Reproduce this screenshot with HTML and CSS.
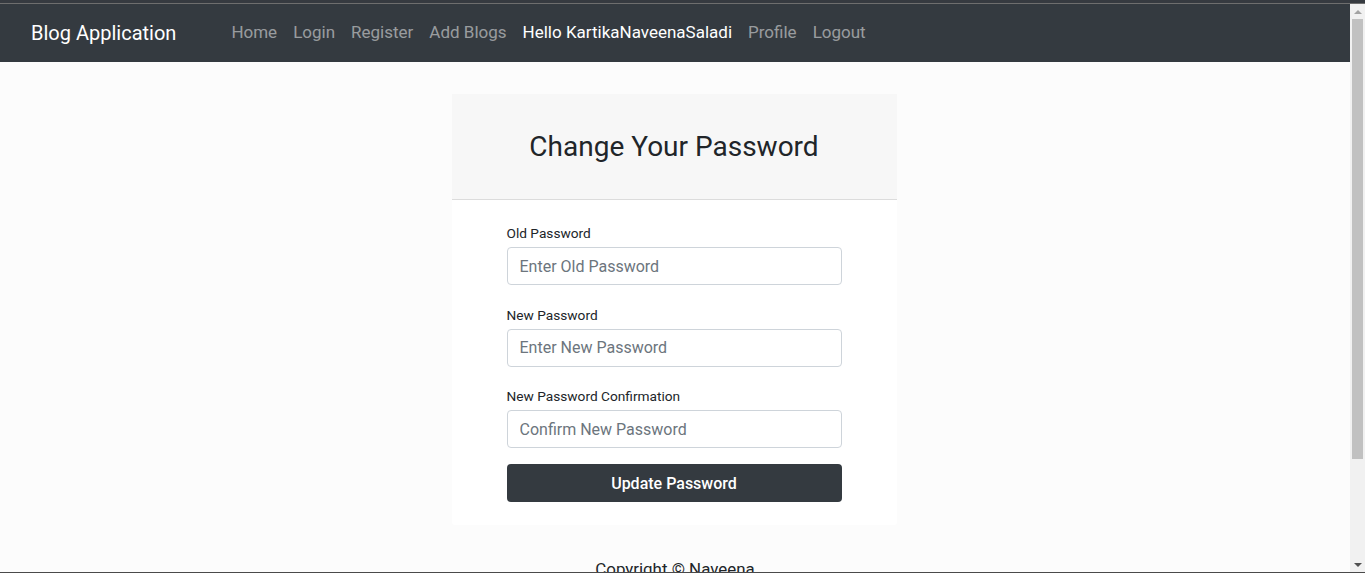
FILE: index.html
```html
<!DOCTYPE html>
<html lang="en">
<head>
<meta charset="utf-8">
<title>Change Your Password</title>
<link rel="stylesheet" href="styles.css">
</head>
<body>
<div class="topstrip"></div>
<div class="frame">
  <div class="viewport">
    <nav class="navbar">
      <a class="brand" href="#">Blog Application</a>
      <ul class="nav">
        <li><a class="nav-link" href="#">Home</a></li>
        <li><a class="nav-link" href="#">Login</a></li>
        <li><a class="nav-link" href="#">Register</a></li>
        <li><a class="nav-link" href="#">Add Blogs</a></li>
        <li><span class="nav-link active">Hello KartikaNaveenaSaladi</span></li>
        <li><a class="nav-link" href="#">Profile</a></li>
        <li><a class="nav-link" href="#">Logout</a></li>
      </ul>
    </nav>
    <main class="main">
      <section class="card">
        <header class="card-header">
          <h2 class="card-title">Change Your Password</h2>
        </header>
        <form class="card-body">
          <div class="form-group">
            <label class="label" for="old">Old Password</label>
            <input class="input" id="old" type="password" placeholder="Enter Old Password">
          </div>
          <div class="form-group">
            <label class="label" for="new1">New Password</label>
            <input class="input" id="new1" type="password" placeholder="Enter New Password">
          </div>
          <div class="form-group">
            <label class="label" for="new2">New Password Confirmation</label>
            <input class="input" id="new2" type="password" placeholder="Confirm New Password">
          </div>
          <button class="btn" type="button">Update Password</button>
        </form>
      </section>
      <footer class="footer">Copyright © Naveena</footer>
    </main>
  </div>
  <div class="scrollbar">
    <div class="sb-arrow sb-up"></div>
    <div class="sb-track"><div class="sb-thumb"></div></div>
    <div class="sb-arrow sb-down"></div>
  </div>
</div>
<div class="bottomline"></div>
</body>
</html>
```
FILE: styles.css
```css
* { box-sizing: border-box; }
html, body { margin: 0; padding: 0; }
body {
  height: 573px;
  overflow: hidden;
  display: flex;
  flex-direction: column;
  font-family: Roboto, "Liberation Sans", Arial, sans-serif;
  color: #212529;
  background: #fcfcfc;
}
.topstrip {
  height: 4px;
  flex: none;
  background: #363a40;
  border-bottom: 1px solid #6e6e6e;
}
.frame {
  flex: 1;
  display: flex;
  min-height: 0;
}
.viewport {
  flex: 1;
  overflow: hidden;
  background: #fcfcfc;
}
.bottomline {
  height: 1px;
  flex: none;
  background: #4a4a4a;
}

/* navbar */
.navbar {
  height: 58px;
  background: #343a40;
  display: flex;
  align-items: center;
  padding-left: 31px;
  padding-bottom: 2px;
}
.brand {
  color: #fff;
  font-size: 20px;
  text-decoration: none;
  margin-right: 47px;
  margin-top: 1px;
}
.nav {
  list-style: none;
  margin: 0;
  padding: 0;
  display: flex;
}
.nav-link {
  display: block;
  padding: 0 8px;
  font-size: 17px;
  color: rgba(255, 255, 255, 0.5);
  text-decoration: none;
}
.nav-link.active { color: #fff; }

/* main */
.main {
  display: flex;
  flex-direction: column;
  align-items: center;
  padding-top: 32px;
}
.card {
  width: 445px;
  background: #fff;
  border-radius: 3px;
  margin-right: 2px;
}
.card-header {
  height: 106px;
  background: #f7f7f7;
  border-bottom: 1px solid #dcdcdc;
  display: flex;
  align-items: center;
  justify-content: center;
}
.card-title {
  margin: 0;
  font-size: 28px;
  font-weight: 400;
  line-height: 1.2;
  color: #212529;
  padding-top: 1px;
}
.card-body {
  padding: 23px 55px 23px;
}
.form-group { margin-bottom: 19.5px; }
.label {
  display: block;
  font-size: 13.7px;
  line-height: 21px;
  margin-bottom: 3px;
  color: #212529;
}
.input {
  display: block;
  width: 100%;
  height: 38px;
  padding: 6px 12px;
  font-family: inherit;
  font-size: 16px;
  color: #495057;
  background: #fff;
  border: 1px solid #ced4da;
  border-radius: 4px;
}
.input::placeholder { color: #6c757d; opacity: 1; }
.btn {
  display: block;
  width: 100%;
  height: 38px;
  margin-top: -3.5px;
  font-family: inherit;
  font-size: 16px;
  font-weight: 500;
  color: #fff;
  background: #343a40;
  border: 0;
  border-radius: 4px;
}
.footer {
  margin-top: 32px;
  font-size: 16.9px;
  line-height: 24px;
  color: #212529;
}

/* fake scrollbar */
.scrollbar {
  width: 15px;
  flex: none;
  background: #f1f1f1;
  display: flex;
  flex-direction: column;
}
.sb-arrow {
  height: 15px;
  flex: none;
  display: flex;
  align-items: center;
  justify-content: center;
}
.sb-up::before {
  content: "";
  border-left: 4px solid transparent;
  border-right: 4px solid transparent;
  border-bottom: 4px solid #a3a3a3;
}
.sb-down::before {
  content: "";
  border-left: 4px solid transparent;
  border-right: 4px solid transparent;
  border-top: 4px solid #505050;
}
.sb-track {
  flex: 1;
  padding: 0 2px;
}
.sb-thumb {
  height: 440px;
  background: #c1c1c1;
}
```
